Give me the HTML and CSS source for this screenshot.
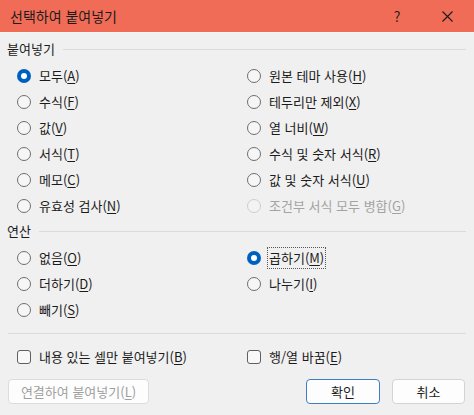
FILE: index.html
```html
<!DOCTYPE html>
<html lang="ko">
<head>
<meta charset="utf-8">
<title>선택하여 붙여넣기</title>
<link rel="stylesheet" href="styles.css">
</head>
<body>
<div class="dialog">
  <div class="titlebar">
    <span class="title">선택하여 붙여넣기</span>
    <span class="help">?</span>
    <svg class="close" width="11" height="11" viewBox="0 0 11 11"><path d="M0.5 0.5 L10.5 10.5 M10.5 0.5 L0.5 10.5" stroke="#1a1a1a" stroke-width="1.1" fill="none"/></svg>
  </div>
  <div class="content">
    <div class="group-head"><span class="group-label">붙여넣기</span><span class="group-line"></span></div>
    <div class="options">
      <div class="opt"><span class="radio checked"></span><span>모두(<u>A</u>)</span></div>
      <div class="opt"><span class="radio"></span><span>원본 테마 사용(<u>H</u>)</span></div>
      <div class="opt"><span class="radio"></span><span>수식(<u>F</u>)</span></div>
      <div class="opt"><span class="radio"></span><span>테두리만 제외(<u>X</u>)</span></div>
      <div class="opt"><span class="radio"></span><span>값(<u>V</u>)</span></div>
      <div class="opt"><span class="radio"></span><span>열 너비(<u>W</u>)</span></div>
      <div class="opt"><span class="radio"></span><span>서식(<u>T</u>)</span></div>
      <div class="opt"><span class="radio"></span><span>수식 및 숫자 서식(<u>R</u>)</span></div>
      <div class="opt"><span class="radio"></span><span>메모(<u>C</u>)</span></div>
      <div class="opt"><span class="radio"></span><span>값 및 숫자 서식(<u>U</u>)</span></div>
      <div class="opt"><span class="radio"></span><span>유효성 검사(<u>N</u>)</span></div>
      <div class="opt disabled"><span class="radio"></span><span>조건부 서식 모두 병합(<u>G</u>)</span></div>
    </div>
    <div class="group-head second"><span class="group-label">연산</span><span class="group-line"></span></div>
    <div class="options">
      <div class="opt"><span class="radio"></span><span>없음(<u>O</u>)</span></div>
      <div class="opt"><span class="radio checked"></span><span class="focus">곱하기(<u>M</u>)</span></div>
      <div class="opt"><span class="radio"></span><span>더하기(<u>D</u>)</span></div>
      <div class="opt"><span class="radio"></span><span>나누기(<u>I</u>)</span></div>
      <div class="opt"><span class="radio"></span><span>빼기(<u>S</u>)</span></div>
    </div>
    <div class="separator"></div>
    <div class="options checks">
      <div class="opt"><span class="checkbox"></span><span>내용 있는 셀만 붙여넣기(<u>B</u>)</span></div>
      <div class="opt"><span class="checkbox"></span><span>행/열 바꿈(<u>E</u>)</span></div>
    </div>
    <div class="buttons">
      <button class="btn link" disabled>연결하여 붙여넣기(<u>L</u>)</button>
      <button class="btn ok">확인</button>
      <button class="btn cancel">취소</button>
    </div>
  </div>
</div>
</body>
</html>
```
FILE: styles.css
```css
html, body {
  margin: 0;
  padding: 0;
}
body {
  width: 474px;
  height: 415px;
  background: #f0f0f0;
  font-family: "Noto Sans CJK KR", "Noto Sans", sans-serif;
  font-size: 13px;
  color: #1b1b1b;
  overflow: hidden;
}
.dialog {
  width: 474px;
  height: 415px;
  background: #f0f0f0;
}
.titlebar {
  height: 32px;
  background: #f06c56;
  display: flex;
  align-items: center;
  padding-left: 10px;
  border-bottom: 1px solid #f7f7f7;
}
.title {
  font-size: 14px;
  flex: 1;
  line-height: 16px;
}
.help {
  font-size: 14px;
  width: 10px;
  text-align: center;
  line-height: 16px;
}
.close {
  margin-left: 40px;
  margin-right: 21px;
}
.content {
  padding: 0 8px;
}
.group-head {
  display: flex;
  align-items: center;
  height: 16px;
  margin-top: 8px;
  line-height: 16px;
}
.group-head.second {
  margin-top: 4px;
}
.group-label {
  margin-left: -1px;
}
.group-line {
  flex: 1;
  height: 1px;
  background: #dadada;
  margin-left: 8px;
}
.options {
  display: grid;
  grid-template-columns: 230px 1fr;
  padding-left: 9px;
  margin-top: 6px;
}
.opt {
  display: flex;
  align-items: center;
  height: 26px;
  gap: 8px;
  line-height: 16px;
}
.opt u {
  text-decoration-thickness: 1px;
  text-underline-offset: 2px;
}
.radio {
  width: 14px;
  height: 14px;
  box-sizing: border-box;
  border-radius: 50%;
  border: 1px solid #6f6f6f;
  background: #f6f6f6;
  flex: none;
  position: relative;
}
.radio.checked {
  border: none;
  background: #0060c0;
}
.radio.checked::after {
  content: "";
  position: absolute;
  left: 4px;
  top: 4px;
  width: 6px;
  height: 6px;
  border-radius: 50%;
  background: #ffffff;
}
.opt.disabled {
  color: #a3a3a3;
}
.opt.disabled .radio {
  border-color: #cdcdcd;
  background: #f3f3f3;
}
.focus {
  border: 1px dotted #555;
  padding: 2px 1px;
  margin-left: -2px;
}
.separator {
  height: 1px;
  background: #dadada;
  margin-top: 10px;
}
.checks {
  margin-top: 10px;
}
.checkbox {
  width: 14px;
  height: 14px;
  box-sizing: border-box;
  border: 1px solid #5f5f5f;
  border-radius: 3px;
  background: #f8f8f8;
  flex: none;
}
.buttons {
  display: flex;
  margin-top: 9px;
  gap: 12px;
  padding-right: 1px;
}
.btn {
  height: 25px;
  box-sizing: border-box;
  border: 1px solid #d3d3d3;
  border-radius: 4px;
  background: #fdfdfd;
  font-family: "Noto Sans CJK KR", "Noto Sans", sans-serif;
  font-size: 13px;
  color: #1b1b1b;
  padding: 0;
  line-height: 16px;
}
.btn u {
  text-underline-offset: 2px;
}
.btn.link {
  width: 141px;
  color: #9f9f9f;
  border-color: #dcdcdc;
}
.btn.ok {
  width: 74px;
  margin-left: auto;
  border-color: #3c7fc4;
}
.btn.cancel {
  width: 73px;
}
```
